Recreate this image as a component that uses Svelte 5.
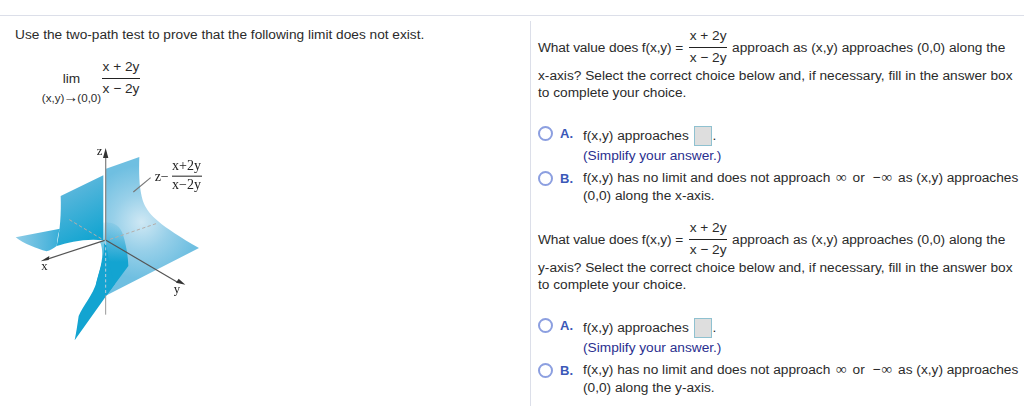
<script>
  const blocks = [
    { first: 'approach as (x,y) approaches (0,0) along the', l2: 'x-axis? Select the correct choice below and, if necessary, fill in the answer box', axis: 'x-axis' },
    { first: 'approach as (x,y) approaches (0,0) along the', l2: 'y-axis? Select the correct choice below and, if necessary, fill in the answer box', axis: 'y-axis' }
  ];
</script>

<div class="page">
  <section class="left">
    <p class="prompt">Use the two-path test to prove that the following limit does not exist.</p>
    <div class="limit">
      <div class="lim"><span>lim</span><small>(x,y)<span class="arrow">→</span>(0,0)</small></div>
      <div class="frac"><span>x + 2y</span><span class="den">x − 2y</span></div>
    </div>
    <svg class="plot" viewBox="0 0 660 660" width="220" height="220" aria-label="surface plot">
      <defs>
        <linearGradient id="wing" gradientUnits="userSpaceOnUse" x1="47" y1="310" x2="300" y2="320">
          <stop offset="0" stop-color="#90cde7"/><stop offset="0.4" stop-color="#4fb5dc"/><stop offset="0.7" stop-color="#12a4d1"/><stop offset="1" stop-color="#0fa2cf"/>
        </linearGradient>
        <linearGradient id="back" gradientUnits="userSpaceOnUse" x1="200" y1="170" x2="280" y2="320">
          <stop offset="0" stop-color="#5cb7dc"/><stop offset="1" stop-color="#14a5d1"/>
        </linearGradient>
        <radialGradient id="rp" gradientUnits="userSpaceOnUse" cx="425" cy="270" r="170">
          <stop offset="0" stop-color="#cfe8f4"/><stop offset="0.5" stop-color="#98d0e9"/><stop offset="1" stop-color="#6fbfe1"/>
        </radialGradient>
        <linearGradient id="lump" gradientUnits="userSpaceOnUse" x1="340" y1="275" x2="340" y2="390">
          <stop offset="0" stop-color="#2fa9d6" stop-opacity="0.15"/><stop offset="1" stop-color="#13a4d1" stop-opacity="1"/>
        </linearGradient>
      </defs>
      <path d="M318 110L418 75C416 130 418 180 432 215C448 250 480 280 597 348L320 490L318 325Z" fill="url(#rp)"/>
      <path d="M47 316L180 290C172 310 172 330 170 342C160 350 150 355 140 358C110 350 70 335 47 316Z" fill="url(#wing)"/>
      <path d="M182 192L310 130V325C262 318 205 330 170 342C180 300 184 240 182 192Z" fill="url(#back)"/>
      <path d="M310 272C340 268 360 280 368 305C378 335 384 370 385 402L320 490L288 455C296 420 318 370 300 330L310 325Z" fill="url(#lump)"/>
      <path d="M312 335C316 370 300 410 290 450C278 490 250 520 236 552C232 580 228 605 224 625L320 490L345 455C330 420 325 370 318 335Z" fill="#13a4d1"/>
      <path d="M317 60V325" stroke="#8a8a8a" stroke-width="4"/>
      <path d="M317 48L325 78H309Z" fill="#333"/>
      <path d="M317 490V548" stroke="#999" stroke-width="3"/>
      <path d="M317 330V490" stroke="#bcd" stroke-width="3" stroke-dasharray="9 7"/>
      <path d="M208 263L312 325M330 322L468 275" stroke="#b5aeaa" stroke-width="3" stroke-dasharray="10 7" fill="none"/>
      <path d="M314 325L140 382" stroke="#555" stroke-width="3.5"/>
      <path d="M122 388L148 372L146 384Z" fill="#333"/>
      <path d="M318 325L535 452" stroke="#555" stroke-width="3.5"/>
      <path d="M556 458L528 452L536 440Z" fill="#333"/>
      <path d="M452 137L400 180" stroke="#777" stroke-width="3.5"/>
      <text class="lbl" x="290" y="68">z</text>
      <text class="lbl" x="124" y="414">x</text>
      <text class="lbl" x="521" y="482">y</text>
      <text class="lbl eq" x="464" y="148">z−</text>
      <text class="lbl eq" x="516" y="113">x+2y</text>
      <rect x="516" y="131" width="90" height="3" fill="#222"/>
      <text class="lbl eq" x="516" y="172">x−2y</text>
    </svg>
  </section>

  <section class="right">
    {#each blocks as b}
      <div class="block">
        <div class="q">
          <span class="lead">What value does f(x,y) =</span>
          <div class="frac small"><span>x + 2y</span><span class="den">x − 2y</span></div>
          <span>{b.first}</span>
        </div>
        <p class="rest">{b.l2}<br />to complete your choice.</p>
        <div class="options">
          <div class="opt a">
            <span class="radio"></span><b>A.</b>
            <div class="body">
              <div class="ans">f(x,y) approaches <span class="box"></span>.</div>
              <div class="hint">(Simplify your answer.)</div>
            </div>
          </div>
          <div class="opt b">
            <span class="radio"></span><b>B.</b>
            <div class="body">f(x,y) has no limit and does not approach <span class="inf">∞</span> or <span class="neg">−</span><span class="inf">∞</span> as (x,y) approaches<br />(0,0) along the {b.axis}.</div>
          </div>
        </div>
      </div>
    {/each}
  </section>
</div>

<style>
  :global(body) { margin: 0; background: #fff; }
  .page {
    width: 1024px; height: 406px; box-sizing: border-box; overflow: hidden;
    display: flex; padding-top: 5px;
    font: 13.7px/17px "Liberation Sans", Arial, sans-serif; color: #2b2b2b;
    position: relative;
  }
  .page::before { content: ""; position: absolute; left: 0; right: 0; top: 15px; height: 1px; background: #dcdfe9; }
  .left { width: 530px; flex: none; padding: 21px 0 0 15px; box-sizing: border-box; }
  .prompt { margin: 0; }
  .limit { display: flex; align-items: flex-start; margin: 15px 0 0 26px; }
  .lim { display: flex; flex-direction: column; align-items: center; width: 61px; margin-top: 12px; }
  .lim small { font-size: 11.6px; line-height: 14px; margin-top: 2px; white-space: nowrap; }
  .arrow { font-size: 15px; margin: 0 -1px; line-height: 1; }
  .frac { display: inline-flex; flex-direction: column; align-items: stretch; width: 38px; }
  .frac span { height: 20px; line-height: 17px; text-align: center; white-space: nowrap; }
  .frac .den { border-top: 1px solid #222; line-height: 19px; height: 19px; }
  .plot { display: block; margin: 27px 0 0 -15px; overflow: visible; filter: blur(0.3px); }
  .lbl { font: 38px "Liberation Serif", serif; fill: #222; }
  .lbl.eq { font-size: 42px; }
  .right { flex: 1; border-left: 1px solid #dcdfe9; margin-top: 16px; padding: 0 0 0 7px; white-space: nowrap; }
  .block { height: 192px; padding-top: 6px; box-sizing: border-box; }
  .q { display: flex; align-items: center; gap: 3px; }
  .lead { letter-spacing: -0.12px; }
  .q .small { margin: 0 2px 0 3px; width: 38px; }
  .rest { margin: 0; }
  .options { margin-top: 25px; display: flex; flex-direction: column; gap: 3px; }
  .opt { display: flex; }
  .radio { width: 11px; height: 11px; border: 2px solid #8c9fe0; border-radius: 50%; flex: none; }
  .opt b { color: #3b58b8; width: 23px; margin-left: 7px; flex: none; font-size: 13px; line-height: 15px; }
  .opt.b .radio, .opt.b b { margin-top: 2px; }
  .body { line-height: 18px; }
  .ans { display: flex; align-items: center; gap: 1px; height: 20px; white-space: pre; }
  .box { width: 16px; height: 18px; background: #dedede; border: 1px solid #8fc1d0; display: inline-block; }
  .hint { color: #2a2f8f; line-height: 20px; }
  .inf { font-family: "Liberation Serif", serif; font-size: 15px; line-height: 1; margin: 0 2px; }
  .neg { margin-left: 4px; }
  .neg + .inf { margin-left: 1px; }
</style>
